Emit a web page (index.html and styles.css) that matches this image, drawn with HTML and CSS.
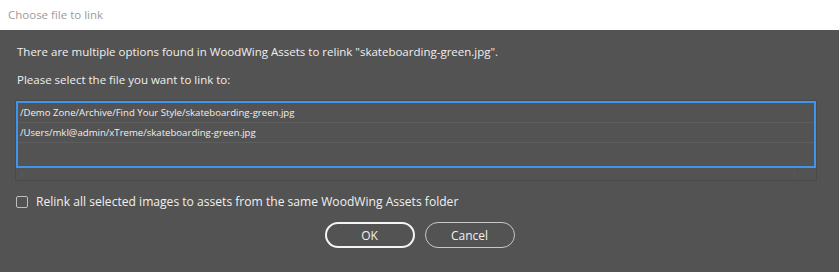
FILE: index.html
```html
<!DOCTYPE html>
<html lang="en">
  <head>
    <meta charset="UTF-8" />
    <meta name="viewport" content="width=device-width, initial-scale=1.0" />
    <link rel="stylesheet" href="styles.css">
    <title>Choose file to link</title>
  </head>
  <body>
    <div class="dialog">
      <!-- title bar -->
      <div class="title-bar">Choose file to link</div>

      <div class="content">
        <p class="message">There are multiple options found in WoodWing Assets to relink "skateboarding-green.jpg".</p>
        <p class="message prompt">Please select the file you want to link to:</p>

        <!-- file list -->
        <div class="list-frame">
          <div class="list-box">
            <div class="list-row">/Demo Zone/Archive/Find Your Style/skateboarding-green.jpg</div>
            <div class="list-row">/Users/mkl@admin/xTreme/skateboarding-green.jpg</div>
          </div>
          <div class="h-scroll">
            <span class="arrow">&lsaquo;</span>
            <span class="arrow">&rsaquo;</span>
          </div>
        </div>

        <!-- relink option -->
        <label class="check-row">
          <input type="checkbox" id="relinkAll" />
          <span class="check-box"></span>
          Relink all selected images to assets from the same WoodWing Assets folder
        </label>

        <div class="buttons">
          <button class="btn btn-default" id="ok">OK</button>
          <button class="btn" id="cancel">Cancel</button>
        </div>
      </div>
    </div>
  </body>
</html>
```
FILE: styles.css
```css
body {
  margin: 0;
  background-color: #535353;
  font-family: "Open Sans", "Noto Sans", sans-serif;
  color: #f0f0f0;
}

.dialog {
  width: 839px;
  height: 272px;
  display: flex;
  flex-direction: column;
}

.title-bar {
  background-color: #ffffff;
  color: #9b9b9b;
  height: 30px;
  line-height: 30px;
  padding-left: 8px;
  font-size: 11.5px;
}

.content {
  padding: 14px 22px 0 15px;
}

.message {
  margin: 0 0 12px 2px;
  font-size: 11.5px;
  line-height: 16px;
}

.list-frame {
  border: 1px solid #4a4a4a;
  height: 79px;
  display: flex;
  flex-direction: column;
}

.list-box {
  flex: none;
  border: 2px solid #3e95ee;
  height: 63px;
}

.list-row {
  height: 19px;
  line-height: 19px;
  border-bottom: 1px solid #5e5e5e;
  padding-left: 2px;
  font-size: 9.6px;
}

.h-scroll {
  flex: 1;
  min-height: 0;
  display: flex;
  justify-content: space-between;
  align-items: center;
  padding: 0 20px 0 4px;
  color: #5c5c5c;
  font-size: 12px;
  line-height: 10px;
}

.check-row {
  display: flex;
  align-items: center;
  margin-top: 15px;
  font-size: 12.1px;
  line-height: 12px;
  cursor: pointer;
}

.check-row input[type="checkbox"] {
  display: none;
}

.check-box {
  width: 10px;
  height: 10px;
  border: 1px solid #bdbdbd;
  border-radius: 2px;
  margin: 0 8px 0 1px;
}

.buttons {
  display: flex;
  justify-content: center;
  gap: 10px;
  margin-top: 14px;
  padding-left: 7px;
}

.btn {
  width: 90px;
  height: 26px;
  border-radius: 13px;
  border: 1px solid #c8c8c8;
  background-color: transparent;
  color: #f0f0f0;
  font-family: inherit;
  font-size: 12px;
  cursor: pointer;
}

.btn-default {
  border: 2px solid #f4f4f4;
}

.btn:hover {
  background-color: rgba(255, 255, 255, 0.08);
}
```
